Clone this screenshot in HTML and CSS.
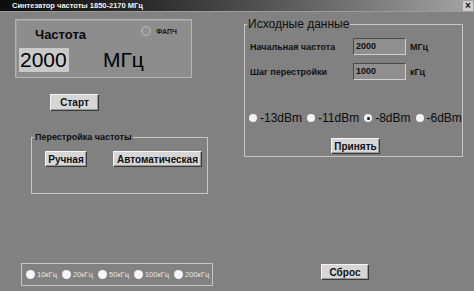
FILE: index.html
```html
<!DOCTYPE html>
<html>
<head>
<meta charset="utf-8">
<link rel="stylesheet" href="styles.css">
</head>
<body>
<div class="window">
  <div class="titlebar">
    <span class="title">Синтезатор частоты 1850-2170 МГц</span>
    <span class="close">×</span>
  </div>
  <div class="content">
    <div class="left">
      <div class="freq-panel">
        <div class="freq-top">
          <span class="freq-label">Частота</span>
          <span class="pll"><span class="pll-radio"></span><span class="pll-text">ФАПЧ</span></span>
        </div>
        <div class="freq-value">
          <span class="freq-num">2000</span>
          <span class="freq-unit">МГц</span>
        </div>
      </div>
      <div class="btn start">Старт</div>
      <fieldset class="group tune">
        <legend>Перестройка частоты</legend>
        <div class="tune-buttons">
          <div class="btn manual">Ручная</div>
          <div class="btn auto">Автоматическая</div>
        </div>
      </fieldset>
      <div class="steps">
        <span class="step"><span class="dot"></span>10кГц</span>
        <span class="step"><span class="dot"></span>20кГц</span>
        <span class="step"><span class="dot"></span>50кГц</span>
        <span class="step"><span class="dot"></span>100кГц</span>
        <span class="step"><span class="dot"></span>200кГц</span>
      </div>
    </div>
    <div class="right">
      <fieldset class="group source">
        <legend>Исходные данные</legend>
        <div class="fields">
          <span class="flabel">Начальная частота</span>
          <span class="input">2000</span>
          <span class="unit">МГц</span>
          <span class="flabel">Шаг перестройки</span>
          <span class="input">1000</span>
          <span class="unit">кГц</span>
        </div>
        <div class="levels">
          <span class="level"><span class="rdot"></span>-13dBm</span>
          <span class="level"><span class="rdot"></span>-11dBm</span>
          <span class="level"><span class="rdot checked"></span>-8dBm</span>
          <span class="level"><span class="rdot"></span>-6dBm</span>
        </div>
        <div class="btn accept">Принять</div>
      </fieldset>
      <div class="btn reset">Сброс</div>
    </div>
  </div>
</div>
</body>
</html>
```

FILE: styles.css
```css
html, body {
  margin: 0;
  padding: 0;
}
body {
  width: 474px;
  height: 291px;
  overflow: hidden;
  background: #818181;
  font-family: "Liberation Sans", Arial, sans-serif;
  color: #000;
}
.window {
  width: 474px;
  height: 291px;
  background: #818181;
}
.titlebar {
  height: 11px;
  display: flex;
  align-items: center;
  background: linear-gradient(to right, #0c0c0c 0%, #2a2a2a 30%, #5a5a5a 60%, #a4a4a4 100%);
  border-bottom: 1px solid #9c9c9c;
  position: relative;
}
.title {
  margin-left: 12px;
  color: #f2f2f2;
  font-weight: bold;
  font-size: 7.5px;
  line-height: 11px;
  white-space: nowrap;
}
.close {
  margin-left: auto;
  width: 10px;
  height: 10px;
  background: #cfcfcf;
  color: #111;
  font-size: 10px;
  font-weight: bold;
  line-height: 10px;
  text-align: center;
  margin-right: 1px;
}
.content {
  display: flex;
}
.left {
  width: 244px;
  display: flex;
  flex-direction: column;
  align-items: flex-start;
}
.right {
  display: flex;
  flex-direction: column;
  align-items: flex-start;
}

/* frequency panel */
.freq-panel {
  box-sizing: border-box;
  margin: 7px 0 0 15px;
  width: 177px;
  height: 59px;
  background: #8d8d8d;
  border: 1px solid #b4b4b4;
  box-shadow: inset 1px 1px 0 #9c9c9c;
  display: flex;
  flex-direction: column;
}
.freq-top {
  display: flex;
  align-items: center;
  height: 16px;
  margin-top: 7px;
}
.freq-label {
  margin-left: 19px;
  font-weight: bold;
  font-size: 13px;
  line-height: 16px;
  color: #0a0a0a;
}
.pll {
  margin-left: auto;
  margin-right: 14px;
  display: flex;
  align-items: center;
  margin-top: -8px;
}
.pll-radio {
  box-sizing: border-box;
  width: 10px;
  height: 10px;
  border-radius: 50%;
  border: 1px solid #bcbcbc;
  background: #929292;
}
.pll-text {
  margin-left: 5px;
  font-size: 7px;
  font-weight: bold;
  color: #1a1a1a;
}
.freq-value {
  display: flex;
  align-items: center;
  margin-top: 5px;
}
.freq-num {
  margin-left: 3px;
  width: 50px;
  height: 24px;
  background: #c9c9c9;
  font-size: 21px;
  line-height: 24px;
  padding-left: 1px;
  box-sizing: border-box;
  color: #000;
}
.freq-unit {
  margin-left: 34px;
  font-size: 21px;
  line-height: 24px;
  color: #000;
}

/* buttons */
.btn {
  box-sizing: border-box;
  display: flex;
  align-items: center;
  justify-content: center;
  background: #d6d6d6;
  border: 1px solid;
  border-color: #f4f4f4 #3a3a3a #3a3a3a #f4f4f4;
  box-shadow: inset -1px -1px 0 #9a9a9a;
  font-weight: bold;
  font-size: 10px;
  color: #111;
  white-space: nowrap;
}
.start {
  margin: 16px 0 0 50px;
  width: 49px;
  height: 17px;
}

/* group boxes */
.group {
  box-sizing: border-box;
  margin: 0;
  padding: 0;
  min-width: 0;
  border: 1px solid #c6c6c6;
}
.group legend {
  padding: 0 1px;
  margin-left: 2px;
  color: #0e0e0e;
}
.tune {
  margin: 21px 0 0 31px;
  width: 177px;
  height: 62px;
}
.tune legend {
  font-weight: bold;
  font-size: 9px;
  line-height: 11px;
}
.tune-buttons {
  display: flex;
  gap: 26px;
  margin: 8px 0 0 13px;
}
.manual {
  width: 42px;
  height: 16px;
}
.auto {
  width: 89px;
  height: 16px;
}

/* step radios */
.steps {
  box-sizing: border-box;
  margin: 69px 0 0 21px;
  width: 192px;
  height: 23px;
  border: 1px solid #c6c6c6;
  display: flex;
  align-items: center;
  padding-left: 4px;
  gap: 5px;
}
.step {
  display: flex;
  align-items: center;
  font-size: 7.5px;
  color: #e6e6e6;
  white-space: nowrap;
}
.dot {
  width: 9px;
  height: 9px;
  border-radius: 50%;
  background: #f6f6f6;
  margin-right: 2px;
}

/* right group */
.source {
  margin-top: 5px;
  width: 219px;
  height: 140px;
}
.source legend {
  font-size: 12px;
  line-height: 14px;
}
.fields {
  display: grid;
  grid-template-columns: 103px 53px auto;
  grid-auto-rows: 17px;
  row-gap: 8px;
  align-items: center;
  margin: 7px 0 0 5px;
}
.flabel {
  font-weight: bold;
  font-size: 9px;
  color: #111;
  white-space: nowrap;
}
.input {
  box-sizing: border-box;
  height: 17px;
  background: #8f8f8f;
  border: 1px solid;
  border-color: #4a4a4a #cfcfcf #cfcfcf #4a4a4a;
  font-weight: bold;
  font-size: 9px;
  line-height: 14px;
  padding-left: 2px;
  color: #111;
}
.unit {
  margin-left: 4px;
  font-weight: bold;
  font-size: 9px;
  color: #111;
}
.levels {
  display: flex;
  align-items: center;
  gap: 5px;
  margin: 31px 0 0 4px;
  height: 14px;
}
.level {
  display: flex;
  align-items: center;
  font-size: 12px;
  color: #0c0c0c;
  white-space: nowrap;
}
.rdot {
  position: relative;
  width: 8px;
  height: 8px;
  border-radius: 50%;
  background: #f4f4f4;
  margin-right: 3px;
}
.rdot.checked::after {
  content: "";
  position: absolute;
  left: 2.5px;
  top: 2.5px;
  width: 3px;
  height: 3px;
  border-radius: 50%;
  background: #111;
}
.accept {
  margin: 13px 0 0 86px;
  width: 49px;
  height: 16px;
}
.reset {
  margin: 107px 0 0 77px;
  width: 48px;
  height: 16px;
}
```
